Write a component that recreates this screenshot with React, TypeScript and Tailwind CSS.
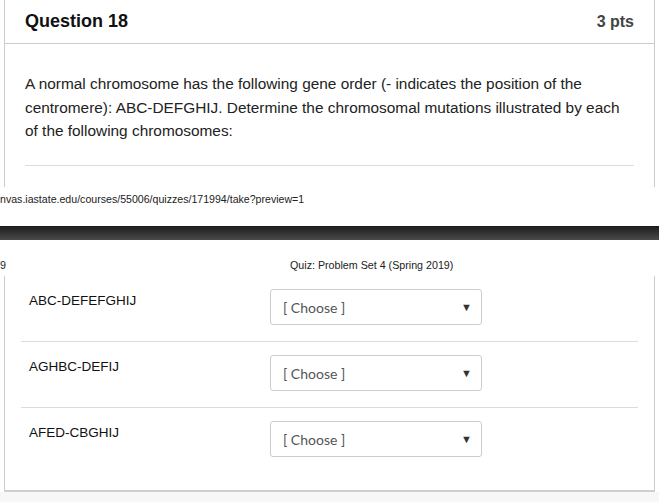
import React from 'react';

const rows = ['ABC-DEFEFGHIJ', 'AGHBC-DEFIJ', 'AFED-CBGHIJ'];

function ChooseSelect() {
  return (
    <div className="w-[212px] h-[36px] border border-[#c7cdd1] rounded-[3px] bg-white flex items-center justify-between pl-[12px] pr-[9px]" style={{ fontFamily: 'Lato, "Liberation Sans", sans-serif' }}>
      <span className="text-[14px] text-[#555]">[ Choose ]</span>
      <span className="text-[11px] text-[#333]">▼</span>
    </div>
  );
}

export default function App() {
  return (
    <div className="w-[659px] h-[502px] bg-white overflow-hidden flex flex-col text-[#222]" style={{ fontFamily: '"Liberation Sans", Arial, sans-serif' }}>
      {/* Question card (top half of page) */}
      <div className="mx-[4px] h-[187px] border-x border-[#c7cdd1] shrink-0 flex flex-col">
        <div className="h-[44px] border-b border-[#c7cdd1] flex items-center justify-between px-[20px]">
          <span className="text-[18px] font-bold text-[#111]">Question 18</span>
          <span className="text-[16px] font-bold text-[#444]">3 pts</span>
        </div>
        <div className="px-[20px] pt-[28px]">
          <p className="text-[15.4px] leading-[23.5px] text-[#222] pr-[8px]">
            A normal chromosome has the following gene order (- indicates the position of the centromere): ABC-DEFGHIJ. Determine the chromosomal mutations illustrated by each of the following chromosomes:
          </p>
          <div className="mt-[22px] border-t border-[#dcdcdc]" />
        </div>
      </div>

      {/* Print page break */}
      <div className="h-[39px] shrink-0 pt-[6px] text-[10.6px] text-[#222] leading-[12px]">
        nvas.iastate.edu/courses/55006/quizzes/171994/take?preview=1
      </div>
      <div className="h-[14px] shrink-0 bg-gradient-to-b from-[#1c1c1c] via-[#333] to-[#4a4a48]" />
      <div className="h-[36px] shrink-0 flex items-start pt-[19px] leading-[12px] text-[10.7px] text-[#222]">
        <span className="w-[290px]">9</span>
        <span>Quiz: Problem Set 4 (Spring 2019)</span>
      </div>

      {/* Answers card */}
      <div className="mx-[4px] h-[216px] border-x border-b-2 border-[#c7cdd1] border-b-[#cfcfcf] shrink-0 px-[16px]">
        {rows.map((r, i) => (
          <div key={r} className={`flex items-start h-[66px] pt-[13px] ${i < rows.length - 1 ? 'border-b border-[#dcdcdc]' : ''}`}>
            <span className="w-[249px] pl-[8px] pt-[2px] text-[13.5px] text-[#111]">{r}</span>
            <ChooseSelect />
          </div>
        ))}
      </div>
      <div className="flex-1 bg-[#f7f7f7]" />
    </div>
  );
}
